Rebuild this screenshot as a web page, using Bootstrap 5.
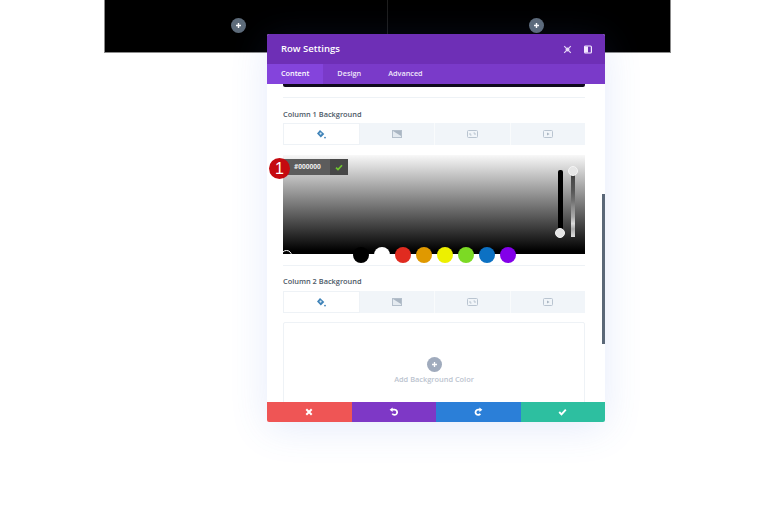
<!DOCTYPE html>
<html lang="en">
<head>
<meta charset="utf-8">
<title>Row Settings</title>
<link href="https://cdn.jsdelivr.net/npm/bootstrap@5.3.0/dist/css/bootstrap.min.css" rel="stylesheet">
<style>
html,body{height:525px;overflow:hidden;background:#fff;font-family:"Open Sans","Liberation Sans",sans-serif}
.stage{position:relative;width:768px;height:525px;overflow:hidden}
.hero{margin-left:104px;width:567px;height:53px;background:#000;border:1px solid #8b8b8b;border-top:0}
.hero-col{height:52px;padding-top:18px}
.hero-a{flex:0 0 282px;padding-left:126px}
.hero-b{flex:1 1 auto;padding-left:141px;border-left:1px solid #1e1e1e}
.round-add{width:15px;height:15px;border-radius:50%;background:#5d6b7a;color:#fff}
.panel{position:absolute;left:267px;top:34px;width:338px;height:388px;background:#fff;box-shadow:0 6px 38px rgba(70,110,230,.14);border-radius:2px}
.panel-head{height:30px;background:#6e2fb6;padding:0 13px 0 14px;color:#fff;border-radius:2px 2px 0 0}
.panel-title{font-size:9.5px;font-weight:600}
.panel-tools{gap:12.5px}
.panel-tabs{height:20px;background:#7a3ac9}
.ptab{height:20px;padding:0 14px;font-size:7.3px;font-weight:600;color:#efe6fa;line-height:19px}
.ptab.on{background:#8444dc;color:#fff}
.ptab+.ptab{padding-right:13px}
.panel-body{height:318px;overflow:hidden;padding:0 20px 0 16px;position:relative}
.topbar{height:2.5px;background:#100a1e;border-radius:0 0 2px 2px}
.rule{height:1px;background:#eef2f6;margin-top:10px}
.field-label{font-size:7.4px;font-weight:600;color:#4c5866;line-height:10px;margin-top:11.5px;margin-bottom:4px}
.field-label.second{margin-top:10px;margin-bottom:5px}
.bgtabs{height:22px;background:#f1f5f9}
.bgtab{flex:1 1 0;display:flex;align-items:center;justify-content:center;border-right:1px solid #f9fbfc}
.bgtab:last-child{border-right:0}
.bgtab.on{background:#fff;border:1px solid #eef2f6}
.picker{position:relative;height:99px;margin-top:10px;background:linear-gradient(#f8f8f8 0,#808080 47%,#000 97%)}
.hexbox{position:absolute;left:0;top:4px;width:65px;height:16px;background:#5c5c5c;color:#eee;font-size:6.6px;font-weight:700;line-height:16px;padding-left:11px}
.hexok{position:absolute;right:0;top:0;width:18px;height:16px;background:#474747;display:flex;align-items:center;justify-content:center}
.bar1{position:absolute;left:275px;top:15px;width:5px;height:65px;background:#000;border-radius:2px}
.bar2{position:absolute;left:288px;top:15px;width:4px;height:67px;background:linear-gradient(#2b2b2b 0,#4a4a4a 15%,#555 30%,#6e6e6e 45%,#8a8a8a 55%,#aaa 70%,#dcdcdc 80%,#aaa 88%,#e0e0e0 100%)}
.knob{position:absolute;width:10px;height:10px;border-radius:50%;background:#e6e6e6;border:1px solid #f4f4f4}
.k1{left:272px;top:73px}
.k2{left:285px;top:11px}
.corner{position:absolute;left:-2px;top:95px;width:11px;height:11px;border-radius:50%;border:1.5px solid #fff}
.swatches{position:absolute;left:70px;top:92px;gap:5px}
.swatch{width:16px;height:16px;border-radius:50%}
.divider2{height:1px;background:#eef2f6;margin-top:11px}
.add-box{height:90px;margin-top:9px;border:1px solid #eef2f6;border-radius:2px;padding-top:33.5px}
.add-btn{width:15px;height:15px;border-radius:50%;background:#a0abbd}
.add-text{font-size:7.4px;font-weight:600;color:#bcc4cf;line-height:10px;margin-top:2.5px}
.scroller{position:absolute;right:0;top:110px;width:3px;height:150px;background:#5b6878}
.panel-foot{height:20px;border-radius:0 0 2px 2px;overflow:hidden}
.fbtn{flex:1 1 25%;display:flex;align-items:center;justify-content:center}
.f-red{background:#ef5555}
.f-pur{background:#7e38c6}
.f-blu{background:#2b7fd8}
.f-grn{background:#2dbfa0}
.step{position:absolute;left:269px;top:158px;width:21px;height:21px;border-radius:50%;background:#c50a10;color:#fff;font-size:16px;font-weight:400;line-height:21px;text-align:center;font-family:"Liberation Sans",sans-serif}
</style>
</head>
<body>
<div class="stage">
  <div class="hero d-flex">
    <div class="hero-col hero-a"><div class="round-add d-flex align-items-center justify-content-center"><svg width="7" height="7" viewBox="0 0 7 7"><path d="M3.5 1v5M1 3.5h5" stroke="#fff" stroke-width="1.4"/></svg></div></div>
    <div class="hero-col hero-b"><div class="round-add d-flex align-items-center justify-content-center"><svg width="7" height="7" viewBox="0 0 7 7"><path d="M3.5 1v5M1 3.5h5" stroke="#fff" stroke-width="1.4"/></svg></div></div>
  </div>

  <div class="panel d-flex flex-column">
    <div class="panel-head d-flex align-items-center justify-content-between">
      <span class="panel-title">Row Settings</span>
      <span class="panel-tools d-flex align-items-center">
        <svg width="9" height="9" viewBox="0 0 9 9"><path d="M1.2 1.2l6.6 6.6M7.8 1.2L1.2 7.8" stroke="#e6d8f7" stroke-width="1.2"/><circle cx="4.5" cy="4.5" r="1.9" fill="#e6d8f7"/></svg>
        <svg width="8" height="9" viewBox="0 0 8 9"><rect x=".6" y="1" width="6.8" height="7" rx="1" fill="none" stroke="#f3e9ff" stroke-width="1.2"/><rect x="1" y="1.5" width="3" height="6" fill="#f3e9ff"/></svg>
      </span>
    </div>
    <div class="panel-tabs d-flex">
      <div class="ptab on">Content</div>
      <div class="ptab">Design</div>
      <div class="ptab">Advanced</div>
    </div>
    <div class="panel-body">
      <div class="topbar"></div>
      <div class="rule"></div>
      <div class="field-label">Column 1 Background</div>
      <div class="bgtabs d-flex">
        <div class="bgtab on"><svg width="10" height="10" viewBox="0 0 10 10"><path d="M4 1L8.3 5 4.8 8.4 1 4.6z" fill="#3f83b8"/><circle cx="4.6" cy="4.6" r="1.1" fill="#dbe9f3"/><circle cx="9" cy="8.6" r=".9" fill="#3f83b8"/></svg></div>
        <div class="bgtab"><svg width="10" height="8" viewBox="0 0 10 8"><rect x=".5" y=".5" width="9" height="7" fill="#e4eaf0" stroke="#b4bfcb"/><path d="M1 1h8v5z" fill="#aab6c3"/></svg></div>
        <div class="bgtab"><svg width="11" height="8" viewBox="0 0 11 8"><rect x=".5" y=".5" width="10" height="7" rx="1" fill="none" stroke="#b9c4d0"/><path d="M3 3v2h1.5M6.5 3h1.5v2" stroke="#b9c4d0" fill="none"/></svg></div>
        <div class="bgtab"><svg width="10" height="8" viewBox="0 0 10 8"><rect x=".5" y=".5" width="9" height="7" rx="1" fill="none" stroke="#b9c4d0"/><path d="M4 2.4v3.2L6.6 4z" fill="#aab6c3"/></svg></div>
      </div>
      <div class="picker">
        <div class="hexbox">#000000<span class="hexok"><svg width="8" height="7" viewBox="0 0 8 7"><path d="M1 3.6l2 2L7 1.2" fill="none" stroke="#6fc52e" stroke-width="1.7"/></svg></span></div>
        <div class="bar1"></div>
        <div class="bar2"></div>
        <div class="knob k1"></div>
        <div class="knob k2"></div>
        <div class="corner"></div>
        <div class="swatches d-flex">
          <div class="swatch" style="background:#000"></div>
          <div class="swatch" style="background:#fff"></div>
          <div class="swatch" style="background:#e02b20"></div>
          <div class="swatch" style="background:#e09900"></div>
          <div class="swatch" style="background:#edf000"></div>
          <div class="swatch" style="background:#7cda24"></div>
          <div class="swatch" style="background:#0c71c3"></div>
          <div class="swatch" style="background:#8300e9"></div>
        </div>
      </div>
      <div class="divider2"></div>
      <div class="field-label second">Column 2 Background</div>
      <div class="bgtabs d-flex">
        <div class="bgtab on"><svg width="10" height="10" viewBox="0 0 10 10"><path d="M4 1L8.3 5 4.8 8.4 1 4.6z" fill="#3f83b8"/><circle cx="4.6" cy="4.6" r="1.1" fill="#dbe9f3"/><circle cx="9" cy="8.6" r=".9" fill="#3f83b8"/></svg></div>
        <div class="bgtab"><svg width="10" height="8" viewBox="0 0 10 8"><rect x=".5" y=".5" width="9" height="7" fill="#e4eaf0" stroke="#b4bfcb"/><path d="M1 1h8v5z" fill="#aab6c3"/></svg></div>
        <div class="bgtab"><svg width="11" height="8" viewBox="0 0 11 8"><rect x=".5" y=".5" width="10" height="7" rx="1" fill="none" stroke="#b9c4d0"/><path d="M3 3v2h1.5M6.5 3h1.5v2" stroke="#b9c4d0" fill="none"/></svg></div>
        <div class="bgtab"><svg width="10" height="8" viewBox="0 0 10 8"><rect x=".5" y=".5" width="9" height="7" rx="1" fill="none" stroke="#b9c4d0"/><path d="M4 2.4v3.2L6.6 4z" fill="#aab6c3"/></svg></div>
      </div>
      <div class="add-box d-flex flex-column align-items-center">
        <div class="add-btn d-flex align-items-center justify-content-center"><svg width="7" height="7" viewBox="0 0 7 7"><path d="M3.5 1v5M1 3.5h5" stroke="#fff" stroke-width="1.3"/></svg></div>
        <div class="add-text">Add Background Color</div>
      </div>
      <div class="scroller"></div>
    </div>
    <div class="panel-foot d-flex">
      <div class="fbtn f-red"><svg width="8" height="8" viewBox="0 0 8 8"><path d="M1.3 1.3l5.4 5.4M6.7 1.3L1.3 6.7" stroke="#fff" stroke-width="2"/></svg></div>
      <div class="fbtn f-pur"><svg width="10" height="10" viewBox="0 0 10 10"><path d="M3 2.7h2.6a2.6 2.6 0 1 1-2.3 3.9" fill="none" stroke="#fff" stroke-width="1.8"/><path d="M3.6.4v4.6L.6 2.7z" fill="#fff"/></svg></div>
      <div class="fbtn f-blu"><svg width="10" height="10" viewBox="0 0 10 10"><path d="M7 2.7H5.2a2.6 2.6 0 1 0 2.1 4" fill="none" stroke="#fff" stroke-width="1.8"/><path d="M6.4.4v4.6l3-2.3z" fill="#fff"/></svg></div>
      <div class="fbtn f-grn"><svg width="9" height="8" viewBox="0 0 9 8"><path d="M1.2 4l2.3 2.3L7.8 1.6" fill="none" stroke="#fff" stroke-width="1.9"/></svg></div>
    </div>
  </div>
  <div class="step">1</div>
</div>
<script src="https://cdn.jsdelivr.net/npm/bootstrap@5.3.0/dist/js/bootstrap.bundle.min.js"></script>
</body>
</html>
